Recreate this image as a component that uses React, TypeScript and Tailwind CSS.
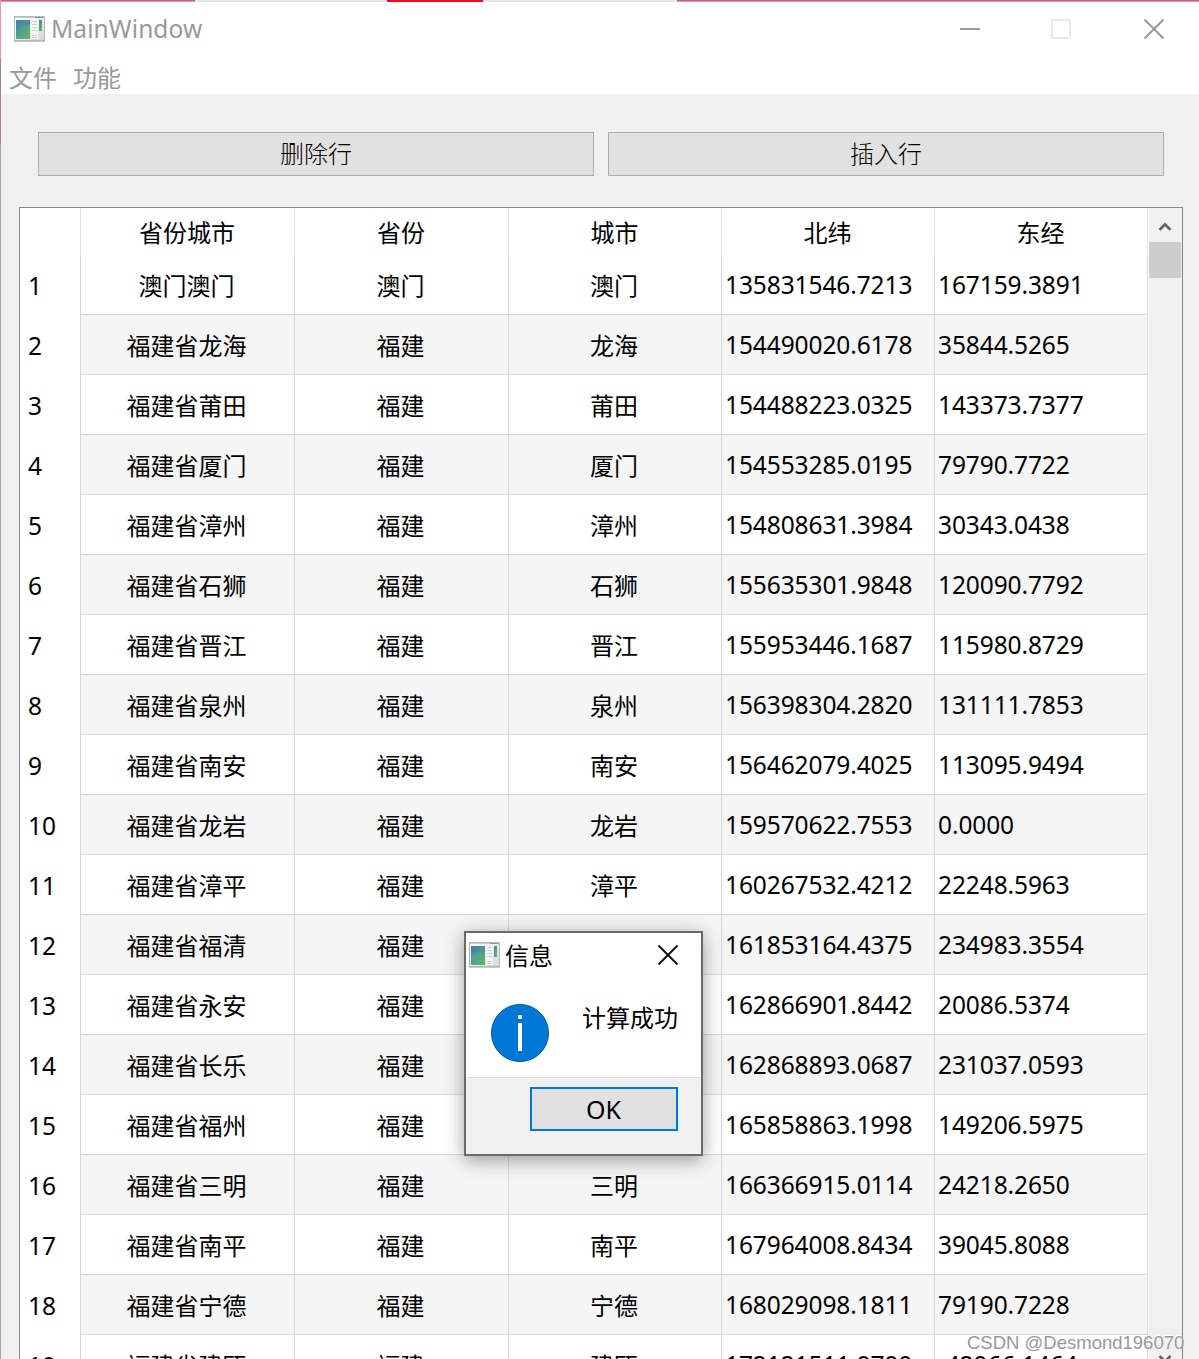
const columns = ['省份城市', '省份', '城市', '北纬', '东经'];

const rows = [
  ['澳门澳门', '澳门', '澳门', '135831546.7213', '167159.3891'],
  ['福建省龙海', '福建', '龙海', '154490020.6178', '35844.5265'],
  ['福建省莆田', '福建', '莆田', '154488223.0325', '143373.7377'],
  ['福建省厦门', '福建', '厦门', '154553285.0195', '79790.7722'],
  ['福建省漳州', '福建', '漳州', '154808631.3984', '30343.0438'],
  ['福建省石狮', '福建', '石狮', '155635301.9848', '120090.7792'],
  ['福建省晋江', '福建', '晋江', '155953446.1687', '115980.8729'],
  ['福建省泉州', '福建', '泉州', '156398304.2820', '131111.7853'],
  ['福建省南安', '福建', '南安', '156462079.4025', '113095.9494'],
  ['福建省龙岩', '福建', '龙岩', '159570622.7553', '0.0000'],
  ['福建省漳平', '福建', '漳平', '160267532.4212', '22248.5963'],
  ['福建省福清', '福建', '福清', '161853164.4375', '234983.3554'],
  ['福建省永安', '福建', '永安', '162866901.8442', '20086.5374'],
  ['福建省长乐', '福建', '长乐', '162868893.0687', '231037.0593'],
  ['福建省福州', '福建', '福州', '165858863.1998', '149206.5975'],
  ['福建省三明', '福建', '三明', '166366915.0114', '24218.2650'],
  ['福建省南平', '福建', '南平', '167964008.8434', '39045.8088'],
  ['福建省宁德', '福建', '宁德', '168029098.1811', '79190.7228'],
  ['福建省建瓯', '福建', '建瓯', '172121511.9799', '-42966.1464'],
];

const grid = 'grid grid-cols-[61px_214px_214px_213px_213px_213px]';

function WindowIcon({ className = '' }: { className?: string }) {
  return (
    <svg width="32" height="26" viewBox="0 0 32 26" className={className}>
      <defs>
        <linearGradient id="pane" x1="0" y1="0" x2="0.6" y2="1">
          <stop offset="0" stopColor="#4a80a8" />
          <stop offset="0.5" stopColor="#4f9f90" />
          <stop offset="1" stopColor="#62b070" />
        </linearGradient>
        <linearGradient id="frame" x1="0" y1="0" x2="1" y2="1">
          <stop offset="0" stopColor="#fff" />
          <stop offset="1" stopColor="#d5d7d9" />
        </linearGradient>
      </defs>
      <rect x="1.5" y="0.5" width="30" height="24" fill="url(#frame)" stroke="#b3b7bc" />
      <path d="M2 1.5h29" stroke="#c6cdd6" />
      <path d="M22 1.5h8" stroke="#8795a8" />
      <path d="M1 25.5h31" stroke="#c9c9c9" />
      <rect x="3" y="4" width="14" height="19" fill="url(#pane)" />
      <path d="M3 14Q9 9 17 9V4H3z" fill="#477ba5" opacity="0.35" />
      <rect x="18" y="4" width="7" height="19" fill="#f6f6f6" />
      <path d="M19 5.5h5M19 8.5h5M19 11.5h5M19 14.5h5M19 19.5h5M19 21.5h5" stroke="#cdcdcd" />
      <rect x="26" y="4" width="3" height="11" fill="url(#pane)" />
    </svg>
  );
}

function TitleBar() {
  return (
    <header className="flex h-[54px] items-center pl-[12px] text-[#999]">
      <WindowIcon />
      <span className="ml-[6px] text-[24.5px] tracking-[0.1px]">MainWindow</span>
      <svg width="206" height="22" viewBox="0 0 206 22" className="ml-auto mr-[34px]" fill="none" strokeWidth="2">
        <path d="M1 11h20" stroke="#999" />
        <rect x="93" y="2" width="18" height="18" stroke="#e9e9e9" />
        <path d="M185.5 1.5l19 19M204.5 1.5l-19 19" stroke="#999" />
      </svg>
    </header>
  );
}

function DataTable() {
  return (
    <div className="ml-[19px] flex h-[1160px] w-[1164px] border border-[#828790] bg-white">
      <div className="w-[1128px] shrink-0">
        <div className={`${grid} h-[47px] leading-[50px]`}>
          <div className="border-r border-[#e5e5e5]" />
          {columns.map((c) => (
            <div key={c} className="h-[47px] border-r border-[#e5e5e5] pr-px text-center">{c}</div>
          ))}
        </div>
        {rows.map((row, i) => (
          <div key={i} className={`${grid} h-[60px]`}>
            <div className="h-[60px] border-r border-[#d8d8d8] pl-2 text-[24.5px] leading-[61px] tracking-[-0.1px]">{i + 1}</div>
            {row.map((cell, j) => (
              <div
                key={j}
                className={`h-[60px] border-r border-b border-[#d8d8d8] ${i % 2 ? 'bg-[#f5f5f5]' : 'bg-white'} ${
                  j < 3 ? 'pr-[2px] text-center leading-[61px]' : 'pl-[3px] text-[24.5px] leading-[59px] tracking-[-0.1px]'
                }`}
              >
                {cell}
              </div>
            ))}
          </div>
        ))}
      </div>
      <div className="ml-px flex h-full w-[33px] flex-col items-start bg-[#f0f0f0]">
        <svg width="14" height="34" viewBox="0 0 14 34" className="ml-[9px] shrink-0" fill="none">
          <path d="M1.5 21.8l5.5-5.5 5.5 5.5" stroke="#606060" strokeWidth="2.6" />
        </svg>
        <div className="h-[36px] w-[32px] shrink-0 bg-[#cdcdcd]" />
        <svg width="14" height="10" viewBox="0 0 14 10" className="ml-[9px] mt-[1076px] shrink-0" fill="none">
          <path d="M1.5 2l5.5 5.5 5.5-5.5" stroke="#606060" strokeWidth="2.6" />
        </svg>
      </div>
    </div>
  );
}

function MessageBox() {
  return (
    <div className="absolute left-[464px] top-[931px] flex h-[225px] w-[239px] flex-col border-2 border-[#6a6a6a] bg-white shadow-[0_4px_18px_rgba(0,0,0,0.38)]">
      <div className="flex h-[44px] items-center pl-[2px]">
        <WindowIcon />
        <span className="ml-[5px] mt-px">信息</span>
        <svg width="22" height="22" viewBox="0 0 22 22" className="ml-auto mr-[22px]" fill="none">
          <path d="M1.5 1.5l19 19M20.5 1.5l-19 19" stroke="#111" strokeWidth="2" />
        </svg>
      </div>
      <div className="flex h-[100px] pl-[25px]">
        <svg width="58" height="58" viewBox="0 0 58 58" className="mt-[27px]">
          <circle cx="29" cy="29" r="28.5" fill="#0078d7" stroke="#00569c" />
          <path d="M27 11h4v4h-4zM27 19h4v28h-4z" fill="#fff" />
        </svg>
        <span className="ml-[33px] mt-[23px] leading-[36px]">计算成功</span>
      </div>
      <div className="flex-1 border-t border-[#dfdfdf] bg-[#f0f0f0] pl-[64px] pt-[9px]">
        <button className="block h-[44px] w-[148px] border-2 border-[#0078d7] bg-[#e1e1e1] pr-px text-[25px] leading-[40px]">OK</button>
      </div>
    </div>
  );
}

export default function App() {
  return (
    <div className="relative flex h-[1359px] w-[1199px] overflow-hidden bg-[#f0f0f0] font-['Noto_Sans','Noto_Sans_CJK_SC',sans-serif] text-[24px] text-black">
      <div className="flex w-px shrink-0 flex-col">
        <div className="h-[58px] bg-[#ff92a6]" />
        <div className="h-[86px] bg-[#ae8177]" />
        <div className="flex-1 bg-[#a5a5a5]" />
      </div>
      <div className="w-[1198px]">
        <div className="flex h-[2px]">
          <div className="w-[194px] border-t border-[#a86c80] bg-[#ef8fab]" />
          <div className="w-[192px] bg-[#e5e5e5]" />
          <div className="w-[96px] bg-[#e81123]" />
          <div className="w-[194px] bg-[#e5e5e5]" />
          <div className="flex-1 border-t border-[#a86c80] bg-[#ef8fab]" />
        </div>
        <div className="h-[92px] bg-white">
          <TitleBar />
          <nav className="flex gap-4 pl-2 leading-[43px] text-[#999]">
            <span>文件</span>
            <span>功能</span>
          </nav>
        </div>
        <div className="flex gap-[14px] pb-[31px] pl-[37px] pt-[38px] font-light">
          <button className="h-[44px] w-[556px] border border-[#adadad] bg-[#e1e1e1]">删除行</button>
          <button className="h-[44px] w-[556px] border border-[#adadad] bg-[#e1e1e1]">插入行</button>
        </div>
        <div className="-ml-px">
          <DataTable />
        </div>
      </div>
      <MessageBox />
      <div className="absolute left-[967px] top-[1331px] whitespace-nowrap font-['Liberation_Sans',sans-serif] text-[18.5px] leading-6 text-[#999] [text-shadow:-1px_-1px_0_#fff]">
        CSDN @Desmond196070
      </div>
    </div>
  );
}
